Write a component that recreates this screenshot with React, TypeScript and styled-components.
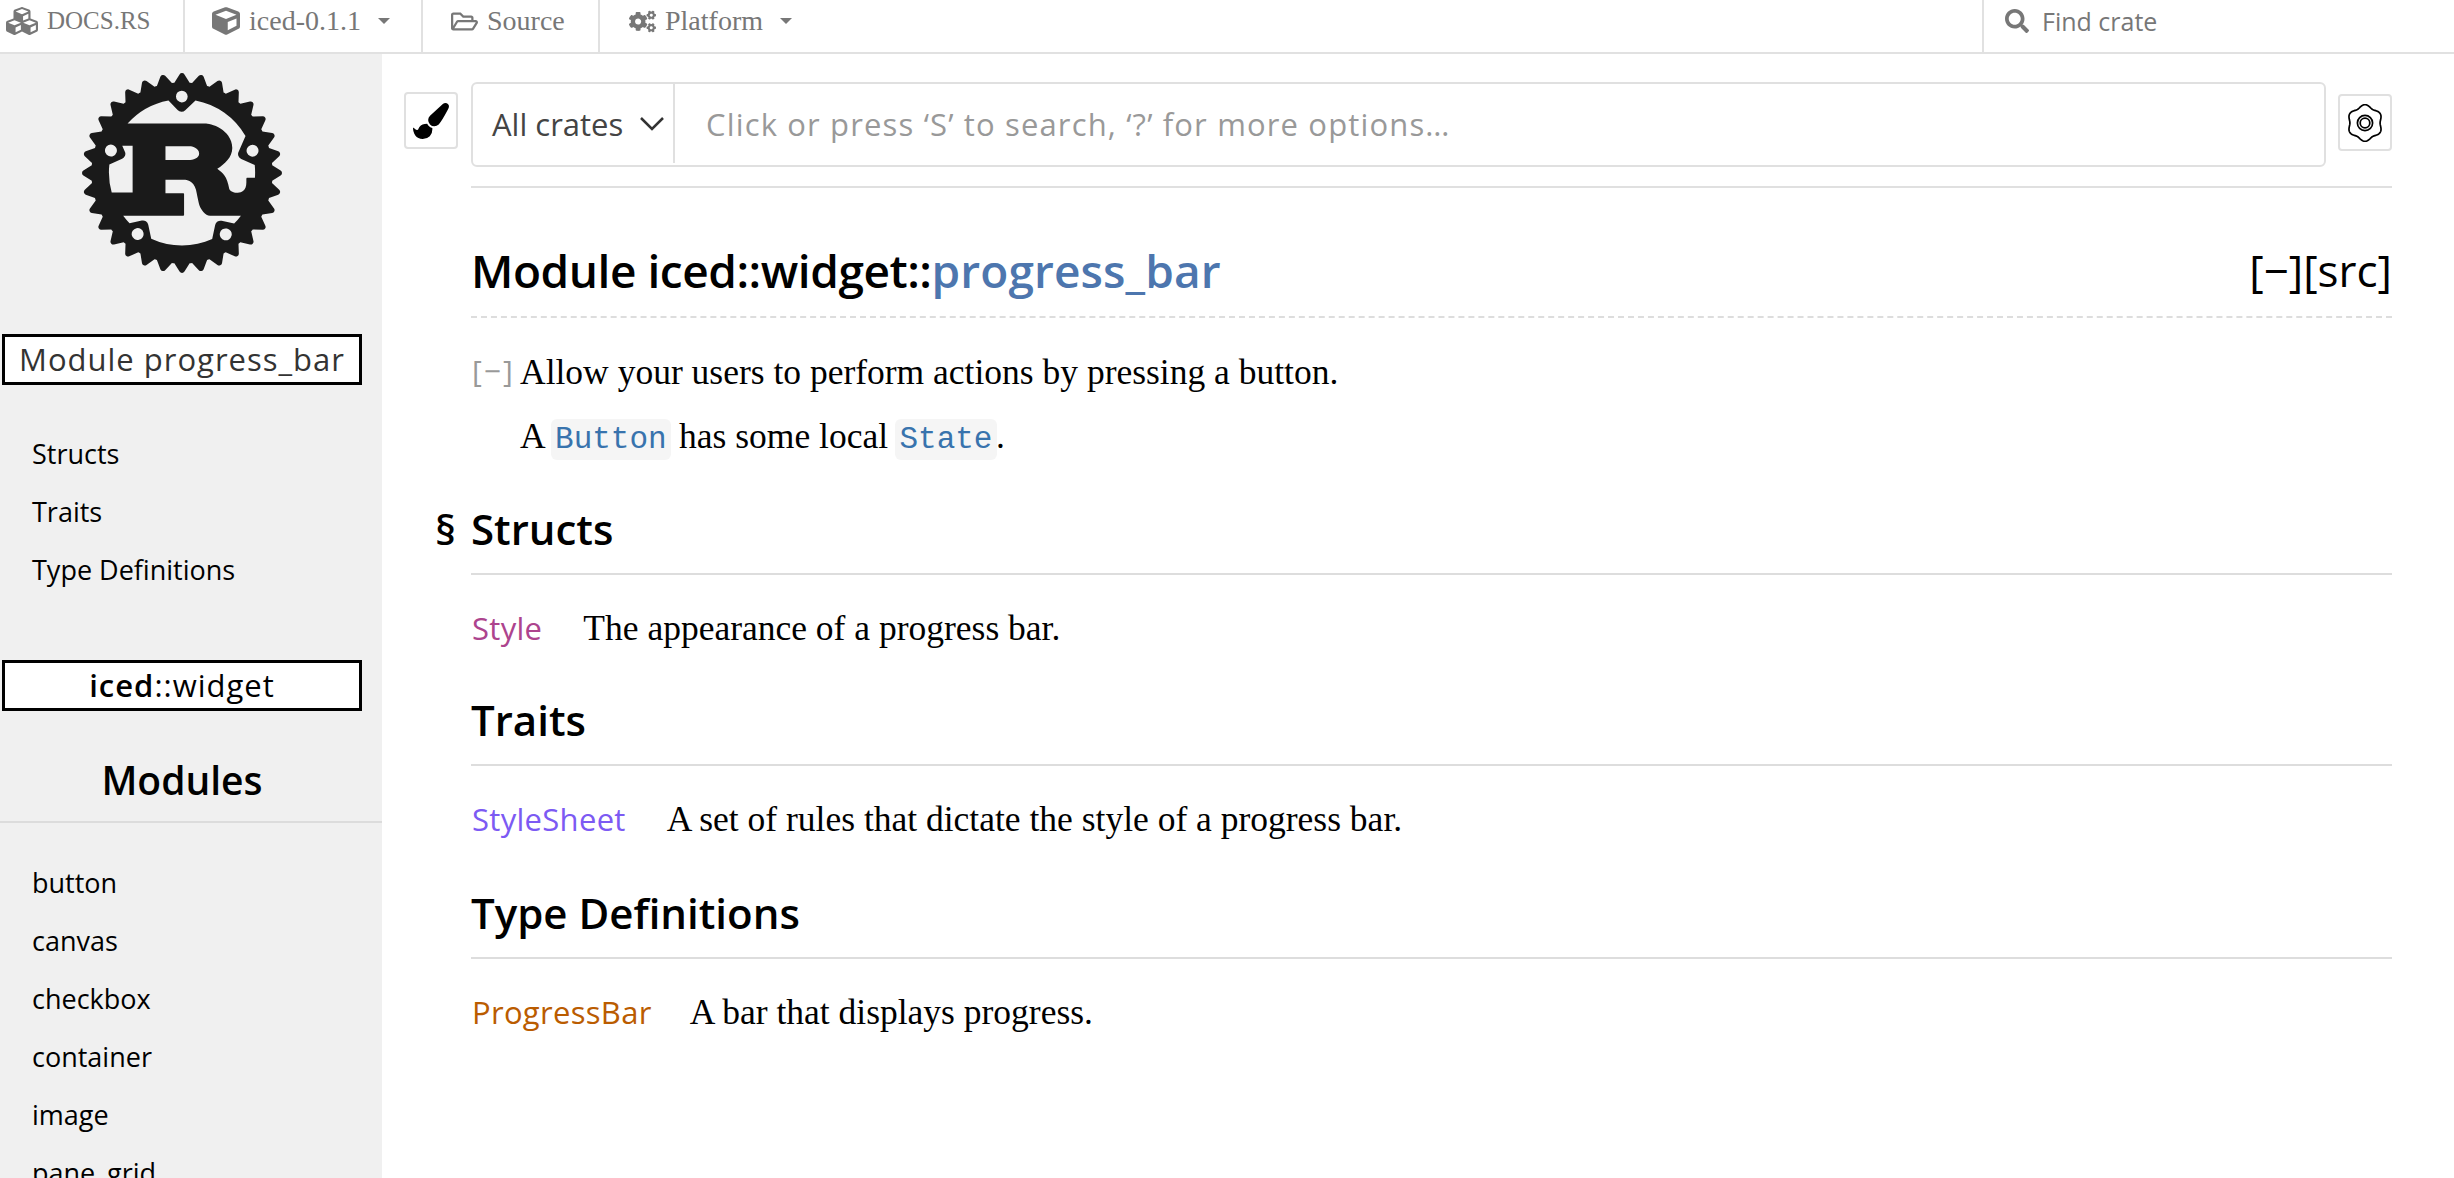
import React from "react";
import styled, { createGlobalStyle } from "styled-components";
import { FaCubes, FaCube, FaRegFolderOpen, FaCogs, FaSearch } from "react-icons/fa";
import { SiRust } from "react-icons/si";

const Global = createGlobalStyle`
  html, body { margin: 0; padding: 0; background: #fff; height: 1178px; overflow: hidden; }
  * { box-sizing: border-box; }
`;

const SANS = `"Open Sans", "Noto Sans", sans-serif`;
const SERIF = `"Liberation Serif", serif`;
const MONO = `"Liberation Mono", monospace`;

const Page = styled.div`
  width: 2454px;
  height: 1178px;
  overflow: hidden;
  display: flex;
  flex-direction: column;
  color: #000;
`;

const TopNav = styled.nav`
  height: 54px;
  flex: none;
  display: flex;
  align-items: stretch;
  border-bottom: 2px solid #e1e1e1;
  background: #fff;
  color: #777;
`;

const NavItem = styled.div<{ $w: number; $pad: number }>`
  width: ${(p) => p.$w}px;
  flex: none;
  display: flex;
  align-items: center;
  gap: 9px;
  padding: 0 0 10px ${(p) => p.$pad}px;
  font-family: ${SERIF};
  font-size: 28px;
  border-right: 2px solid #e1e1e1;
  svg { flex: none; }
`;

const NavBrand = styled(NavItem)`
  font-size: 25px;
`;

const Caret = styled.span`
  width: 0;
  height: 0;
  margin-left: 8px;
  border-left: 6px solid transparent;
  border-right: 6px solid transparent;
  border-top: 6px solid #777;
`;

const FindCrate = styled.div`
  flex: 1;
  display: flex;
  align-items: center;
  gap: 13px;
  padding: 0 0 10px 21px;
  font-family: ${SANS};
  font-size: 25px;
  color: #777;
`;

const Body = styled.div`
  flex: 1;
  display: flex;
  min-height: 0;
`;

const Sidebar = styled.aside`
  width: 382px;
  flex: none;
  background: #f0f0f0;
  font-family: ${SANS};
  overflow: hidden;
  padding-top: 19px;
`;

const LogoWrap = styled.div`
  height: 200px;
  padding-left: 82px;
  color: #1a1a1a;
`;

const Location = styled.div`
  width: 360px;
  height: 51px;
  margin: 61px 0 0 2px;
  padding-bottom: 2px;
  border: 3px solid #000;
  background: #fff;
  display: flex;
  align-items: center;
  justify-content: center;
  font-size: 31px;
  letter-spacing: 1px;
  color: #333;
  white-space: nowrap;
`;

const SideList = styled.ul<{ $top: number }>`
  list-style: none;
  margin: ${(p) => p.$top}px 0 0;
  padding: 0 0 0 32px;
`;

const SideItem = styled.li`
  height: 58px;
  display: flex;
  align-items: center;
  font-size: 27px;
  color: #000;
`;

const CrateBox = styled(Location)`
  margin-top: 62px;
  color: #000;
  b { font-weight: 600; }
`;

const SideTitle = styled.h3`
  margin: 28px 0 0;
  height: 84px;
  padding: 0 18px 2px 0;
  display: flex;
  align-items: center;
  justify-content: center;
  font-size: 39px;
  font-weight: 600;
  border-bottom: 2px solid #dcdcdc;
`;

const Main = styled.main`
  flex: 1;
  min-width: 0;
  padding: 28px 62px 0 22px;
  display: flex;
  flex-direction: column;
`;

const SearchRow = styled.div`
  display: flex;
  align-items: flex-start;
  height: 85px;
`;

const IconButton = styled.div<{ $top: number }>`
  width: 54px;
  height: 57px;
  flex: none;
  margin-top: ${(p) => p.$top}px;
  border: 2px solid #e0e0e0;
  border-radius: 4px;
  display: flex;
  align-items: center;
  justify-content: center;
`;

const SearchBox = styled.div`
  flex: 1;
  height: 85px;
  margin: 0 12px 0 13px;
  border: 2px solid #e0e0e0;
  border-radius: 6px;
  display: flex;
  align-items: stretch;
  padding-bottom: 2px;
  font-family: ${SANS};
`;

const CrateSelect = styled.div`
  width: 202px;
  flex: none;
  border-right: 2px solid #e0e0e0;
  display: flex;
  align-items: center;
  gap: 16px;
  padding-left: 19px;
  font-size: 31px;
  color: #444;
`;

const Placeholder = styled.div`
  flex: 1;
  display: flex;
  align-items: center;
  padding-left: 31px;
  font-size: 31px;
  letter-spacing: 1.15px;
  color: #999;
`;

const Content = styled.div`
  margin-left: 67px;
`;

const Rule = styled.div`
  height: 2px;
  margin-top: 19px;
  background: #e0e0e0;
`;

const TitleRow = styled.div`
  height: 130px;
  display: flex;
  justify-content: space-between;
  align-items: center;
  padding-top: 36px;
  border-bottom: 2px dashed #ddd;
  font-family: ${SANS};
  font-size: 46px;
  font-weight: 600;
`;

const TitleText = styled.span`
  letter-spacing: -0.45px;
`;

const TitleLink = styled.span`
  color: #4d76ae;
  letter-spacing: 0.1px;
`;

const OutOfBand = styled.span`
  font-weight: 400;
  font-size: 44px;
`;

const DocPara = styled.p<{ $top: number }>`
  margin: ${(p) => p.$top}px 0 0;
  font-family: ${SERIF};
  font-size: 35.5px;
  padding-left: 49px;
  position: relative;
  line-height: 40px;
`;

const Toggle = styled.span`
  position: absolute;
  left: 1px;
  top: -1px;
  font-family: ${SANS};
  font-weight: 400;
  font-size: 30px;
  letter-spacing: 2px;
  color: #999;
`;

const InlineCode = styled.code`
  font-family: ${MONO};
  font-size: 31px;
  color: #3873ad;
  background: #f5f5f5;
  border-radius: 6px;
  padding: 3px 4.5px;
  margin: 0 -1px 0 -2px;
`;

const SectionHeading = styled.h2<{ $top: number }>`
  margin: ${(p) => p.$top}px 0 0;
  height: 92px;
  display: flex;
  align-items: center;
  font-family: ${SANS};
  font-size: 42px;
  font-weight: 600;
  border-bottom: 2px solid #ddd;
  position: relative;
`;

const Anchor = styled.span`
  position: absolute;
  left: -36px;
  font-size: 42px;
`;

const ItemRow = styled.div<{ $gap: number }>`
  display: flex;
  align-items: center;
  height: 40px;
  margin-top: 33px;
  padding-left: 1px;
  gap: ${(p) => p.$gap}px;
`;

const ItemName = styled.span<{ $color: string }>`
  font-family: ${SANS};
  font-size: 31px;
  letter-spacing: 0.3px;
  color: ${(p) => p.$color};
`;

const ItemDesc = styled.span`
  font-family: ${SERIF};
  font-size: 35.5px;
`;

const BrushIcon = () => (
  <svg width="36" height="36" viewBox="0 0 1792 1792">
    <path
      fill="#000"
      d="M1615 0q70 0 122.5 46.5t52.5 116.5q0 63-45 151-332 629-465 752-97 91-218 91-126 0-216.5-92.5t-90.5-219.5q0-128 92-212l638-579q59-54 130-54zm-909 1034q39 76 106.5 130t150.5 76l1 71q4 213-129.5 347t-348.5 134q-123 0-218-46.5t-152.5-127.5-86.5-183-29-220q7 5 41 30t62 44.5 59 36.5 46 17q41 0 55-37 25-66 57.5-112.5t69.5-76 88-47.5 103-25.5 125-10.5z"
    />
  </svg>
);

const wheelPath = (() => {
  const pts: string[] = [];
  for (let i = 0; i < 120; i++) {
    const t = (i / 120) * Math.PI * 2;
    const r = 1 - 0.08 * Math.cos(6 * t);
    pts.push(`${(18 + 16.4 * r * Math.cos(t)).toFixed(2)},${(19 + 17 * r * Math.sin(t)).toFixed(2)}`);
  }
  return `M${pts.join("L")}Z`;
})();

const WheelIcon = () => (
  <svg width="36" height="38" viewBox="0 0 36 38" fill="none" stroke="#000" strokeWidth="1.7">
    <path d={wheelPath} />
    <circle cx="18" cy="19" r="7.6" />
    <circle cx="18" cy="19" r="4.8" />
  </svg>
);

const Chevron = () => (
  <svg width="26" height="16" viewBox="0 0 26 16" fill="none" stroke="#333" strokeWidth="2.5">
    <path d="M2 2l11 11L24 2" />
  </svg>
);

export default function App() {
  return (
    <Page>
      <Global />
      <TopNav>
        <NavBrand $w={185} $pad={6}><FaCubes size={32} />DOCS.RS</NavBrand>
        <NavItem $w={238} $pad={27}><FaCube size={28} />iced-0.1.1<Caret /></NavItem>
        <NavItem $w={177} $pad={28}><FaRegFolderOpen size={27} />Source</NavItem>
        <NavItem $w={1384} $pad={29}><FaCogs size={27} />Platform<Caret /></NavItem>
        <FindCrate><FaSearch size={24} />Find crate</FindCrate>
      </TopNav>
      <Body>
        <Sidebar>
          <LogoWrap><SiRust size={200} /></LogoWrap>
          <Location>Module progress_bar</Location>
          <SideList $top={39}>
            <SideItem>Structs</SideItem>
            <SideItem>Traits</SideItem>
            <SideItem>Type Definitions</SideItem>
          </SideList>
          <CrateBox><b>iced</b>::widget</CrateBox>
          <SideTitle>Modules</SideTitle>
          <SideList $top={30}>
            <SideItem>button</SideItem>
            <SideItem>canvas</SideItem>
            <SideItem>checkbox</SideItem>
            <SideItem>container</SideItem>
            <SideItem>image</SideItem>
            <SideItem>pane_grid</SideItem>
          </SideList>
        </Sidebar>
        <Main>
          <SearchRow>
            <IconButton $top={10}><BrushIcon /></IconButton>
            <SearchBox>
              <CrateSelect>All crates<Chevron /></CrateSelect>
              <Placeholder>Click or press ‘S’ to search, ‘?’ for more options…</Placeholder>
            </SearchBox>
            <IconButton $top={12}><WheelIcon /></IconButton>
          </SearchRow>
          <Content>
            <Rule />
            <TitleRow>
              <TitleText>Module iced::widget::<TitleLink>progress_bar</TitleLink></TitleText>
              <OutOfBand>[−][src]</OutOfBand>
            </TitleRow>
            <DocPara $top={34}><Toggle>[−]</Toggle>Allow your users to perform actions by pressing a button.</DocPara>
            <DocPara $top={24}>A <InlineCode>Button</InlineCode> has some local <InlineCode>State</InlineCode>.</DocPara>
            <SectionHeading $top={23}><Anchor>§</Anchor>Structs</SectionHeading>
            <ItemRow $gap={41}><ItemName $color="#ad448e">Style</ItemName><ItemDesc>The appearance of a progress bar.</ItemDesc></ItemRow>
            <SectionHeading $top={26}>Traits</SectionHeading>
            <ItemRow $gap={41}><ItemName $color="#7c5af3">StyleSheet</ItemName><ItemDesc>A set of rules that dictate the style of a progress bar.</ItemDesc></ItemRow>
            <SectionHeading $top={28}>Type Definitions</SectionHeading>
            <ItemRow $gap={38}><ItemName $color="#ba5c00">ProgressBar</ItemName><ItemDesc>A bar that displays progress.</ItemDesc></ItemRow>
          </Content>
        </Main>
      </Body>
    </Page>
  );
}
